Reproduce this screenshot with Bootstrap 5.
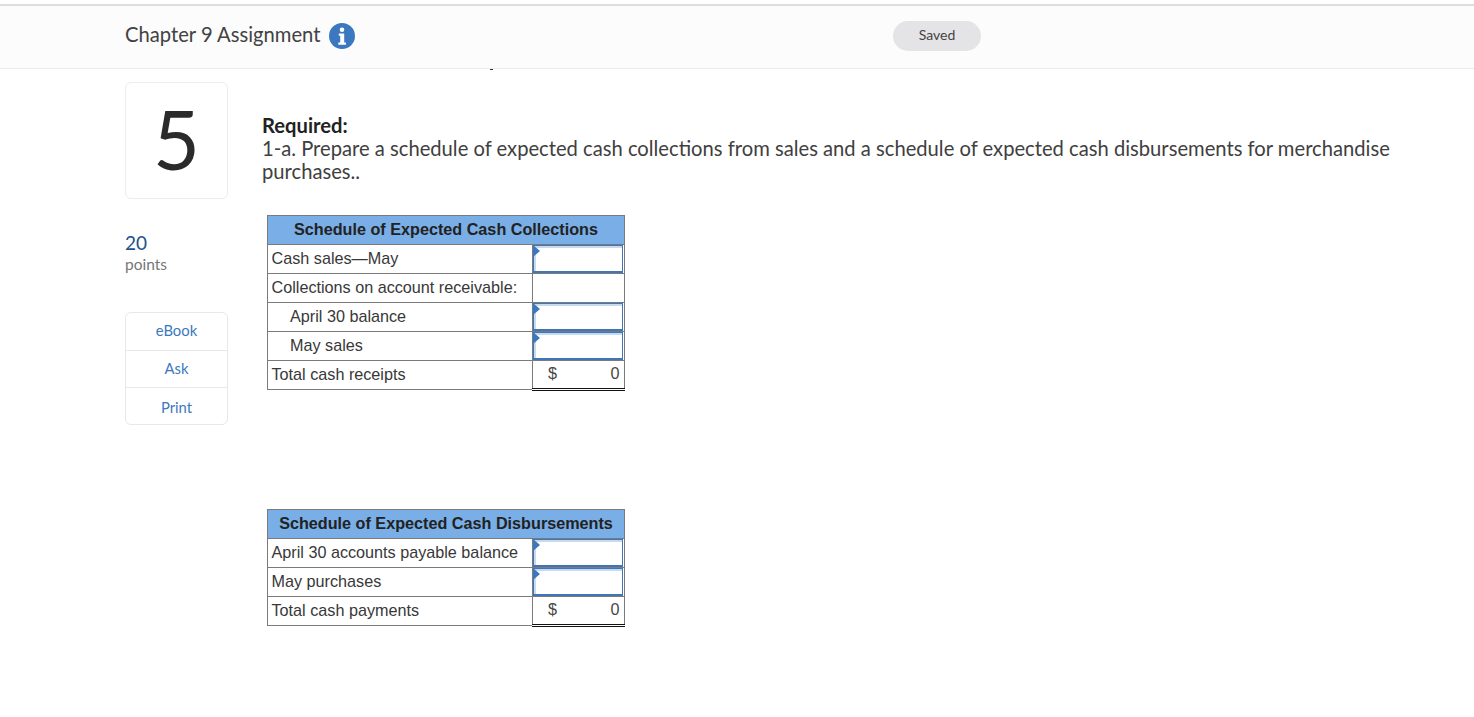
<!DOCTYPE html>
<html lang="en">
<head>
<meta charset="utf-8">
<title>Chapter 9 Assignment</title>
<link href="https://cdn.jsdelivr.net/npm/bootstrap@5.3.0/dist/css/bootstrap.min.css" rel="stylesheet">
<style>
html,body{height:100%;}
body{background:#fff;color:#2b2b2b;font-family:"Lato","Liberation Sans",sans-serif;overflow:hidden;position:relative;}
.topline-rule{height:2px;background:#dedede;margin-top:4px;}
.hdr{height:63px;background:#fcfcfc;border-bottom:1px solid #ececec;padding:0 0 2px 125px;}
.hdr-title{font-size:20.2px;color:#424242;line-height:1;width:768px;gap:9px;}
.hdr-title span{padding-bottom:3px;}
.info-ic{width:26px;height:26px;display:block;}
.saved-pill{width:88px;height:30px;border-radius:15px;background:#e4e3e6;font-size:14px;color:#444;padding-bottom:4px;}
.clip-mark{position:absolute;left:490px;top:69px;width:3px;height:1px;background:#333;}
.page-body{padding:13px 0 0 125px;}
.side-col{width:103px;flex:none;}
.qnum-box{height:117px;border:1px solid #ececec;border-radius:6px;font-size:81px;color:#2b2b2b;line-height:1;padding-bottom:4px;}
.pts-num{font-size:19px;line-height:22px;color:#23518c;margin-top:33px;}
.pts-lbl{font-size:15.5px;line-height:20px;color:#767676;}
.tools{margin-top:38px;border:1px solid #e8e8e8;border-radius:6px;}
.tools a{display:block;text-align:center;font-size:14.8px;color:#3b78bf;text-decoration:none;border-bottom:1px solid #e8e8e8;}
.tools a:nth-child(1){height:38px;line-height:35px;}
.tools a:nth-child(2){height:37px;line-height:35px;}
.tools a:nth-child(3){height:36px;line-height:38px;border-bottom:0;}
.main-col{margin-left:34px;width:1140px;padding-top:31px;}
.req{font-size:20.2px;line-height:23px;color:#404040;width:1135px;padding-top:1px;}
.req strong{color:#222;}
.sched{border-collapse:collapse;font-family:"Liberation Sans",Arial,sans-serif;font-size:16.2px;color:#383838;margin-left:5px;width:358px;table-layout:fixed;}
.sched-one{margin-top:32px;}
.sched-two{margin-top:118px;}
.sched th,.sched td{border:1px solid #7b7b7b;height:29px;padding:0 3.5px 2px;line-height:1;font-weight:400;}
.sched th{background:#7aaee6;font-weight:700;text-align:center;padding:0 0 2px;color:#222;}
.lbl-col{width:265px;}
.sched td.indent{padding-left:22px;}
.sched td.ans{padding:0;position:relative;}
.ans-box{display:block;position:absolute;inset:0 1px 0 0;border:1px solid #3f76b8;border-bottom-width:2px;box-shadow:inset 2px 2px 0 #c6daf1;}
.ans-flag{position:absolute;left:0;top:0;width:0;height:0;border-top:6px solid transparent;border-bottom:6px solid transparent;border-left:7px solid #3b78bf;}
.sched td.sum{border-bottom:3px double #111;}
.sum-in{display:flex;justify-content:space-between;padding:0 1px 0 11.5px;color:#484848;}
</style>
</head>
<body>
<div class="topline-rule"></div>
<header class="hdr d-flex align-items-center">
<div class="hdr-title d-flex align-items-center">
<span>Chapter 9 Assignment</span>
<svg class="info-ic" viewBox="0 0 26 26" aria-hidden="true"><circle cx="13" cy="13" r="13" fill="#3b78bf"/><circle cx="13" cy="6.8" r="2.3" fill="#fff"/><path d="M9.8 10.6h5.4v9h1.8v2.2H9.3v-2.2h1.9v-6.8H9.8z" fill="#fff"/></svg>
</div>
<div class="saved-pill d-flex align-items-center justify-content-center">Saved</div>
</header>
<div class="clip-mark"></div>
<div class="page-body d-flex">
<aside class="side-col">
<div class="qnum-box d-flex align-items-center justify-content-center">5</div>
<div class="pts-num">20</div>
<div class="pts-lbl">points</div>
<nav class="tools">
<a href="#">eBook</a>
<a href="#">Ask</a>
<a href="#">Print</a>
</nav>
</aside>
<main class="main-col">
<p class="req m-0"><strong>Required:</strong><br>1-a. Prepare a schedule of expected cash collections from sales and a schedule of expected cash disbursements for merchandise purchases..</p>
<table class="sched sched-one">
<colgroup><col class="lbl-col"><col></colgroup>
<tr><th colspan="2">Schedule of Expected Cash Collections</th></tr>
<tr><td>Cash sales—May</td><td class="ans"><span class="ans-box"></span><span class="ans-flag"></span></td></tr>
<tr><td>Collections on account receivable:</td><td></td></tr>
<tr><td class="indent">April 30 balance</td><td class="ans"><span class="ans-box"></span><span class="ans-flag"></span></td></tr>
<tr><td class="indent">May sales</td><td class="ans"><span class="ans-box"></span><span class="ans-flag"></span></td></tr>
<tr><td>Total cash receipts</td><td class="sum"><div class="sum-in"><span>$</span><span>0</span></div></td></tr>
</table>
<table class="sched sched-two">
<colgroup><col class="lbl-col"><col></colgroup>
<tr><th colspan="2">Schedule of Expected Cash Disbursements</th></tr>
<tr><td>April 30 accounts payable balance</td><td class="ans"><span class="ans-box"></span><span class="ans-flag"></span></td></tr>
<tr><td>May purchases</td><td class="ans"><span class="ans-box"></span><span class="ans-flag"></span></td></tr>
<tr><td>Total cash payments</td><td class="sum"><div class="sum-in"><span>$</span><span>0</span></div></td></tr>
</table>
</main>
</div>
<script src="https://cdn.jsdelivr.net/npm/bootstrap@5.3.0/dist/js/bootstrap.bundle.min.js"></script>
</body>
</html>
